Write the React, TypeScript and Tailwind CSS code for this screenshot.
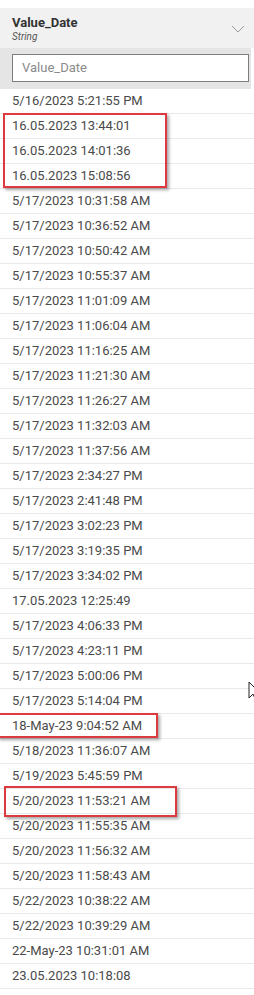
import React from "react";

const rows = [
  "5/16/2023 5:21:55 PM",
  "16.05.2023 13:44:01",
  "16.05.2023 14:01:36",
  "16.05.2023 15:08:56",
  "5/17/2023 10:31:58 AM",
  "5/17/2023 10:36:52 AM",
  "5/17/2023 10:50:42 AM",
  "5/17/2023 10:55:37 AM",
  "5/17/2023 11:01:09 AM",
  "5/17/2023 11:06:04 AM",
  "5/17/2023 11:16:25 AM",
  "5/17/2023 11:21:30 AM",
  "5/17/2023 11:26:27 AM",
  "5/17/2023 11:32:03 AM",
  "5/17/2023 11:37:56 AM",
  "5/17/2023 2:34:27 PM",
  "5/17/2023 2:41:48 PM",
  "5/17/2023 3:02:23 PM",
  "5/17/2023 3:19:35 PM",
  "5/17/2023 3:34:02 PM",
  "17.05.2023 12:25:49",
  "5/17/2023 4:06:33 PM",
  "5/17/2023 4:23:11 PM",
  "5/17/2023 5:00:06 PM",
  "5/17/2023 5:14:04 PM",
  "18-May-23 9:04:52 AM",
  "5/18/2023 11:36:07 AM",
  "5/19/2023 5:45:59 PM",
  "5/20/2023 11:53:21 AM",
  "5/20/2023 11:55:35 AM",
  "5/20/2023 11:56:32 AM",
  "5/20/2023 11:58:43 AM",
  "5/22/2023 10:38:22 AM",
  "5/22/2023 10:39:29 AM",
  "22-May-23 10:31:01 AM",
  "23.05.2023 10:18:08",
];

export default function App() {
  return (
    <div
      className="relative w-[254px] h-[995px] overflow-hidden bg-white"
      style={{ fontFamily: "Roboto, 'Liberation Sans', sans-serif" }}
    >
      <div className="h-[8px] bg-white" />
      {/* Header */}
      <div className="h-[40px] bg-[#f1f1f1] flex items-center justify-between pl-3 pr-[9px] pt-[1px]">
        <div className="flex flex-col leading-none">
          <span className="text-[13px] font-bold text-[#333333] leading-[15px]">Value_Date</span>
          <span className="text-[10px] italic text-[#555555] leading-[13px]">String</span>
        </div>
        <svg width="14" height="8" viewBox="0 0 14 8" className="mt-[1px]">
          <path d="M1 1 L7 7 L13 1" fill="none" stroke="#9a9a9a" strokeWidth="1" />
        </svg>
      </div>
      {/* Filter */}
      <div className="h-[41px] bg-[#e5e5e5] w-[251px] pl-3 pr-[2px] pt-[6px]">
        <div className="h-[28px] w-[237px] bg-white border border-[#7d7d7d] flex items-center pl-[9px]">
          <span className="text-[13px] text-[#8a8a8a]">Value_Date</span>
        </div>
      </div>
      {/* Rows */}
      <div className="flex flex-col">
        {rows.map((r, i) => (
          <div
            key={i}
            className="h-[25px] border-b border-[#e9e9e9] flex items-center pl-3 text-[13px] text-[#4a4a4a]"
          >
            {r}
          </div>
        ))}
      </div>

      {/* Red highlight boxes */}
      <div className="absolute left-[3px] top-[113px] w-[164px] h-[75px] border-2 border-[#dc3a3f] shadow-[2px_2px_3px_rgba(0,0,0,0.35)]" />
      <div className="absolute left-[-3px] top-[713px] w-[161px] h-[25px] border-2 border-[#dc3a3f] shadow-[2px_2px_3px_rgba(0,0,0,0.35)]" />
      <div className="absolute left-[4px] top-[786px] w-[173px] h-[31px] border-2 border-[#dc3a3f] shadow-[2px_2px_3px_rgba(0,0,0,0.35)]" />

      {/* Mouse cursor (partially visible) */}
      <svg className="absolute left-[248px] top-[681px]" width="14" height="22" viewBox="0 0 14 22">
        <path d="M1 1 L1 17 L5 13 L8 20 L10 19 L7 12 L12 12 Z" fill="white" stroke="#222" strokeWidth="1" />
      </svg>
    </div>
  );
}
